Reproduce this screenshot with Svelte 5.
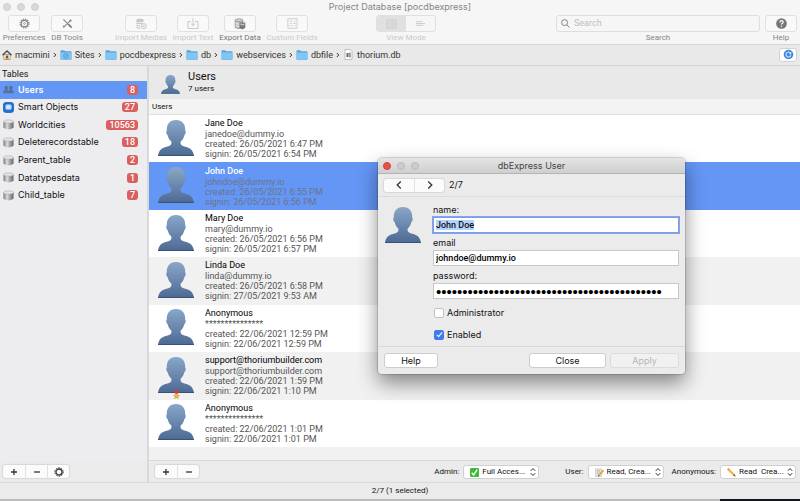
<script>
  import { onMount } from "svelte";

  const tables = [
    { name: "Users", count: 8, icon: "users" },
    { name: "Smart Objects", count: 27, icon: "smart" },
    { name: "Worldcities", count: 10563, icon: "table" },
    { name: "Deleterecordstable", count: 18, icon: "table" },
    { name: "Parent_table", count: 2, icon: "table" },
    { name: "Datatypesdata", count: 1, icon: "table" },
    { name: "Child_table", count: 7, icon: "table" },
  ];

  const users = [
    { name: "Jane Doe", email: "janedoe@dummy.io", created: "26/05/2021 6:47 PM", signin: "26/05/2021 6:54 PM" },
    { name: "John Doe", email: "johndoe@dummy.io", created: "26/05/2021 6:55 PM", signin: "26/05/2021 6:56 PM" },
    { name: "Mary Doe", email: "mary@dummy.io", created: "26/05/2021 6:56 PM", signin: "26/05/2021 6:57 PM" },
    { name: "Linda Doe", email: "linda@dummy.io", created: "26/05/2021 6:58 PM", signin: "27/05/2021 9:53 AM" },
    { name: "Anonymous", email: "***************", created: "22/06/2021 12:59 PM", signin: "22/06/2021 12:59 PM" },
    { name: "support@thoriumbuilder.com", email: "support@thoriumbuilder.com", created: "22/06/2021 1:59 PM", signin: "22/06/2021 1:10 PM", admin: true },
    { name: "Anonymous", email: "***************", created: "22/06/2021 1:01 PM", signin: "22/06/2021 1:01 PM" },
  ];

  const path = ["macmini", "Sites", "pocdbexpress", "db", "webservices", "dbfile", "thorium.db"];

  const access = [
    { id: "admin", label: "Admin:", value: "Full Acces...", icon: "check" },
    { id: "user", label: "User:", value: "Read, Crea...", icon: "memo" },
    { id: "anonymous", label: "Anonymous:", value: "Read\u00a0 Crea...", icon: "pencil" },
  ];

  let activeTable = $state(0);
  let selected = $state(1);
  let name = $state("John Doe");
  let email = $state("johndoe@dummy.io");
  let password = $state("x".repeat(43));
  let administrator = $state(false);
  let enabled = $state(true);
  let nameInput;

  // Start with the whole name selected, ready to be typed over
  onMount(() => {
    nameInput.focus();
    nameInput.select();
  });
</script>

{#snippet person()}
  <svg class="person" viewBox="0 0 36 36" aria-hidden="true">
    <path
      fill="url(#person-fill)"
      d="M18 0C11.500 0 8.500 4.500 8.800 10.500c-.9.300-.6 3.900.9 4.800.5 2.600 1.700 4.700 3.600 6.200.4 1.700.1 3.200-1.300 4.100C8 27.800 1.500 27 0 35.500h36c-1.500-8.500-8-7.700-12-9.900-1.400-.9-1.700-2.400-1.300-4.100 1.900-1.500 3.100-3.600 3.600-6.200 1.500-.9 1.800-4.500.9-4.800C27.500 4.500 24.500 0 18 0z"
    />
    <path stroke="#36517b" d="M0 35.500h36" />
  </svg>
{/snippet}

{#snippet folder(mark)}
  <svg class="folder" viewBox="0 0 12 10" aria-hidden="true">
    <path fill="#56a4dc" d="M.5 1q0-.7.7-.7h3l1 1h5.600q.7 0 .7.7v7q0 .7-.7.7H1.200q-.7 0-.7-.7z" />
    <path fill="#80c5f3" d="M.5 2.600h11v6.200q0 .6-.7.6H1.200q-.7 0-.7-.6z" />
    {#if mark}
      <circle cx="6" cy="6" r="2.300" fill="none" stroke="#3f8fcd" stroke-width=".8" />
      <path stroke="#3f8fcd" stroke-width=".8" d="m5 7 2-2" />
    {/if}
  </svg>
{/snippet}

{#snippet gear()}
  <svg viewBox="0 0 12 12" width="11" height="11" fill="none" stroke="currentColor" aria-hidden="true">
    <circle cx="6" cy="6" r="4.800" stroke-width="1.300" stroke-dasharray="1.500 1.010" />
    <circle cx="6" cy="6" r="3.500" stroke-width="1.300" />
    <circle cx="6" cy="6" r="1" stroke-width=".8" />
  </svg>
{/snippet}

<svg class="defs" width="0" height="0" aria-hidden="true">
  <defs>
    <linearGradient id="person-fill" x1="0" y1="0" x2="0" y2="1">
      <stop offset="0" stop-color="#89a7c9" />
      <stop offset="1" stop-color="#4d6a94" />
    </linearGradient>
    <linearGradient id="drum-fill">
      <stop offset="0" stop-color="#777" />
      <stop offset=".35" stop-color="#ddd" />
      <stop offset=".6" stop-color="#aaa" />
      <stop offset="1" stop-color="#666" />
    </linearGradient>
  </defs>
</svg>

<div class="window">
  <header class="toolbar">
    <div class="titlebar">
      <div class="lights"><i></i><i></i><i></i></div>
      <h1>Project Database [pocdbexpress]</h1>
    </div>
    <div class="tools">
      <button class="tool wide">
        <span class="face">{@render gear()}</span>
        Preferences
      </button>
      <button class="tool narrow">
        <span class="face">
          <svg viewBox="0 0 12 12" width="11" height="11" fill="none" stroke="currentColor">
            <path stroke-width="1.200" d="m1.500 1.500 9 9M10 2 1.500 10.500" />
            <path stroke-width="2" d="m7 7 3.300 3.300M8.500 2 10 3.500M1.500 9.500l1-1" />
          </svg>
        </span>
        DB Tools
      </button>
      <button class="tool medias" disabled>
        <span class="face">
          <svg viewBox="0 0 12 12" width="12" height="12" fill="none" stroke="currentColor">
            <ellipse cx="5" cy="2.500" rx="3.800" ry="1.300" fill="currentColor" />
            <path stroke-width="1.300" d="M1.200 4.800q3 1.600 6.800.2M1.200 7q2 1.200 4 1M1.200 9.300q2 1.200 4 1" />
            <circle cx="8.800" cy="8.200" r="2.600" />
            <path d="M7.500 8.200h2.600M8.800 7v2.500" />
          </svg>
        </span>
        Import Medias
      </button>
      <button class="tool" disabled>
        <span class="face">
          <svg viewBox="0 0 12 12" width="12" height="12" fill="none" stroke="currentColor">
            <path d="M4 3.500H1v7h10v-7H8M6 0v7.500M3.800 5.500 6 7.700l2.200-2.200" />
          </svg>
        </span>
        Import Text
      </button>
      <button class="tool strong">
        <span class="face">
          <svg viewBox="0 0 12 12" width="12" height="12" fill="none" stroke="#999">
            <path fill="#c4c4c4" d="M1.200 2.200v7.300q3.800 2 7.600 0V2.200z" />
            <ellipse cx="5" cy="2.200" rx="3.800" ry="1.300" fill="#ddd" />
            <path stroke="#fff" stroke-width=".6" d="M1.200 5q2 1.200 4 1.200M1.200 7.500q2 1.200 4 1.200" />
            <path fill="#777" stroke="none" d="M5.500 4.500h5.800v5.300l-3 1.700-2.800-1.700z" />
            <path stroke="#fff" stroke-width=".7" d="M7 5.500v1.300h2.800V5.500" />
          </svg>
        </span>
        Export Data
      </button>
      <button class="tool medias" disabled>
        <span class="face">
          <svg viewBox="0 0 12 12" width="11" height="11" fill="none" stroke="currentColor">
            <path d="M1 .8h10v10.400H1zM3 3.500h3M8 3.500h1.500M3 6h2M6.500 6h3M3 8.500h3M8 8.500h1.500" />
          </svg>
        </span>
        Custom Fields
      </button>
      <div class="view-mode">
        <div class="segments">
          <button class="on" aria-label="Grid view">
            <svg viewBox="0 0 12 10" width="11" height="10" fill="none" stroke="currentColor">
              <path d="M1 .5h10v9H1zM2.500 3h1M5 3h4.500M2.500 5h1M5 5h4.500M2.500 7h1M5 7h4.500" />
            </svg>
          </button>
          <button aria-label="Text view">
            <svg viewBox="0 0 12 10" width="11" height="10" fill="none" stroke="currentColor">
              <path d="M1 2.500h7M1 4.500h10M1 6.500h8" />
            </svg>
          </button>
        </div>
        View Mode
      </div>
      <div class="search">
        <div class="field">
          <svg viewBox="0 0 10 10" width="9" height="9" fill="none" stroke="#777">
            <circle cx="4" cy="4" r="3.300" />
            <path d="m6.500 6.500 3 3" />
          </svg>
          <input id="search" type="search" placeholder="Search" />
        </div>
        <label for="search">Search</label>
      </div>
      <button class="tool narrow">
        <span class="face">
          <svg viewBox="0 0 12 12" width="11" height="11" fill="none">
            <circle cx="6" cy="6" r="5.800" fill="#777" />
            <path stroke="#fff" stroke-width="1.300" d="M4.200 4.800C4.200 2.200 8 2.400 7.800 4.600 7.700 5.800 6 5.800 6 7.200M6 8.200v1.300" />
          </svg>
        </span>
        Help
      </button>
    </div>
  </header>

  <nav class="path" aria-label="Path">
    <ol>
      {#each path as part, i}
        <li>
          {#if i === 0}
            <svg viewBox="0 0 10 10" width="10" height="10">
              <path fill="#f7f1e5" stroke="#777" stroke-width=".6" d="M1.800 4.500h6.400v5H1.800z" />
              <path fill="none" stroke="#4d4d4d" stroke-width="1.400" d="M.5 5.200 5 1l4.500 4.200" />
              <path fill="#8d4a16" d="M3.800 5.500h2.500v4H3.800z" />
              <path fill="#f09b28" d="M3.800 8h2.500v1.500H3.800z" />
            </svg>
          {:else if i === path.length - 1}
            <svg class="file" viewBox="0 0 10 11" width="11" height="11">
              <path fill="#fff" stroke="#aaa" stroke-width=".7" d="M1.500.5h5l2 2v8h-7z" />
              <path fill="#666" d="M3 4h2v4H3z" />
              <path fill="#999" d="M5.300 3.500h2v5h-2z" />
            </svg>
          {:else}
            {@render folder(i === 1)}
          {/if}
          <a href={"#" + part}>{part}</a>
          {#if i < path.length - 1}
            <svg class="sep" viewBox="0 0 4 6" width="4" height="6" fill="none" stroke="#333">
              <path d="m.8 1 2 2-2 2" />
            </svg>
          {/if}
        </li>
      {/each}
    </ol>
    <button class="refresh" aria-label="Refresh">
      <svg viewBox="0 0 12 12" width="11" height="11">
        <circle cx="6" cy="6" r="5.200" fill="#3c83e2" />
        <path fill="none" stroke="#d8eaff" stroke-width="1.200" d="M8.600 6.800A2.700 2.700 0 1 1 7.600 3.800" />
        <path fill="#fff" d="M6.500 5.800 9 2.800v3z" />
      </svg>
    </button>
  </nav>

  <div class="body">
    <aside class="sidebar">
      <h2>Tables</h2>
      <ul class="tables">
        {#each tables as table, i}
          <li>
            <button class:active={i === activeTable} onclick={() => (activeTable = i)}>
              {#if table.icon === "users"}
                <svg viewBox="0 0 12 12" width="11" height="11" fill="#587199">
                  <circle cx="3.500" cy="4" r="2" />
                  <circle cx="8.500" cy="4" r="2" />
                  <path d="M0 10q0-3 2.500-3.500V5h2v1.500Q6 7 6 8q0-1 1.500-1.500V5h2v1.500Q12 7 12 10z" />
                </svg>
              {:else if table.icon === "smart"}
                <svg viewBox="0 0 12 12" width="11" height="11">
                  <rect x=".7" y=".7" width="10.600" height="10.600" rx="2" fill="#2270dc" stroke="#1656b5" />
                  <rect x="3" y="3" width="6" height="5" rx="1" fill="#dcecff" stroke="#83b8ff" />
                </svg>
              {:else}
                <svg viewBox="0 0 12 12" width="11" height="11">
                  <path fill="url(#drum-fill)" d="M.5 2.500v7Q6 13.500 11.500 9.500v-7z" />
                  <ellipse cx="6" cy="2.700" rx="5.500" ry="1.800" fill="#e4e4e4" stroke="#999" stroke-width=".5" />
                </svg>
              {/if}
              <span class="label">{table.name}</span>
              <span class="badge">{table.count}</span>
            </button>
          </li>
        {/each}
      </ul>
      <div class="bar">
        <div class="group">
          <button aria-label="Add table"><svg viewBox="0 0 6 6" width="6" height="6"><path d="M0 3h6M3 0v6" /></svg></button>
          <button aria-label="Remove table"><svg viewBox="0 0 6 6" width="6" height="6"><path d="M0 3h6" /></svg></button>
          <button class="cog" aria-label="Table settings">
            <svg viewBox="0 0 10 10" width="10" height="10">
              <circle cx="5" cy="5" r="3" />
              <circle cx="5" cy="5" r="4.200" stroke-width="1" stroke-dasharray="1.500 1.140" />
            </svg>
          </button>
        </div>
      </div>
    </aside>

    <main>
      <div class="heading">
        {@render person()}
        <div>
          <h2>Users</h2>
          <p>7 users</p>
        </div>
      </div>
      <div class="column">Users</div>
      <div class="list">
        <ul class="users">
          {#each users as user, i}
            <li>
              <button class:selected={i === selected} onclick={() => (selected = i)}>
                <span class="avatar">
                  {@render person()}
                  {#if user.admin}
                    <svg class="medal" viewBox="0 0 8 10" width="7" height="9">
                      <path fill="#d6333c" d="M1.500 0h5v3L4 5 1.500 3z" />
                      <path fill="#f2b92d" stroke="#b98317" stroke-width=".4" d="m4 3.500 1 2 2.500.300-1.800 1.600.500 2.300L4 8.600 1.800 9.700l.500-2.300L.5 5.800 3 5.500z" />
                    </svg>
                  {/if}
                </span>
                <span class="details">
                  <strong>{user.name}</strong>
                  <span>{user.email}</span>
                  <span>created: {user.created}</span>
                  <span>signin: {user.signin}</span>
                </span>
              </button>
            </li>
          {/each}
        </ul>
      </div>
      <div class="bar">
        <div class="group">
          <button aria-label="Add user"><svg viewBox="0 0 6 6" width="6" height="6"><path d="M0 3h6M3 0v6" /></svg></button>
          <button aria-label="Remove user"><svg viewBox="0 0 6 6" width="6" height="6"><path d="M0 3h6" /></svg></button>
        </div>
        <div class="access">
          {#each access as item}
            <label for={item.id}>{item.label}</label>
            <div class="popup">
              <svg class="emoji" viewBox="0 0 10 10" width="9" height="9">
                {#if item.icon === "check"}
                  <rect width="10" height="10" rx="1.500" fill="#3dbb36" />
                  <path fill="none" stroke="#fff" stroke-width="1.600" d="m2 5.200 2 2.500 4-6" />
                {:else if item.icon === "memo"}
                  <path fill="#e8e8e8" stroke="#aaa" stroke-width=".5" d="M.5 1h7v8.500h-7z" />
                  <path stroke="#999" stroke-width=".6" d="M2 3h4M2 4.500h3M2 6h2" />
                  <path stroke="#e9a42c" stroke-width="2" d="M9.300 2.500 4.500 8" />
                  <path stroke="#554032" stroke-width="1.200" d="m4.500 8-.9 1" />
                {:else}
                  <path stroke="#f3b62e" stroke-width="2.500" d="m2 2 5.500 5.500" />
                  <path stroke="#e58a89" stroke-width="2.500" d="m.8.8 1.400 1.400" />
                  <path fill="#7a4b22" d="m8.400 6.600-1.800 1.800L9.800 9.800z" />
                {/if}
              </svg>
              <select id={item.id}><option>{item.value}</option></select>
              <svg class="arrows" viewBox="0 0 6 10" width="6" height="10" fill="none" stroke="#333">
                <path d="m.8 3.800 2.200-2.300 2.200 2.300M.8 6.200l2.200 2.300 2.200-2.300" />
              </svg>
            </div>
          {/each}
        </div>
      </div>
    </main>
  </div>

  <footer class="status">2/7 (1 selected)</footer>
  <div class="desktop"></div>
</div>

<div class="dialog" role="dialog" aria-labelledby="dialog-title">
  <div class="titlebar">
    <div class="lights"><i class="close"></i><i></i><i></i></div>
    <h2 id="dialog-title">dbExpress User</h2>
  </div>
  <div class="pager">
    <div class="group">
      <button aria-label="Previous"><svg viewBox="0 0 6 8" width="6" height="8"><path d="M4.800.5 1.200 4l3.600 3.500" /></svg></button>
      <button aria-label="Next"><svg viewBox="0 0 6 8" width="6" height="8"><path d="M1.200.5 4.800 4 1.200 7.500" /></svg></button>
    </div>
    <span>2/7</span>
  </div>
  <form>
    {@render person()}
    <div class="fields">
      <label for="name">name:</label>
      <input id="name" type="text" bind:value={name} bind:this={nameInput} />
      <label for="email">email</label>
      <input id="email" type="text" bind:value={email} />
      <label for="password">password:</label>
      <input id="password" type="password" autocomplete="off" bind:value={password} />
      <label class="tick"><input type="checkbox" bind:checked={administrator} />Administrator</label>
      <label class="tick"><input type="checkbox" bind:checked={enabled} />Enabled</label>
    </div>
  </form>
  <div class="actions">
    <button class="help">Help</button>
    <button class="dismiss">Close</button>
    <button class="apply" disabled>Apply</button>
  </div>
</div>

<style>
  :global(body) {
    margin: 0;
    font: 400 9px/12px Roboto, "Liberation Sans", sans-serif;
    color: #111;
    background: #ececec;
  }

  h1,
  h2,
  p,
  ul,
  ol {
    margin: 0;
    padding: 0;
    font: inherit;
    list-style: none;
  }

  button,
  input,
  select {
    box-sizing: border-box;
    margin: 0;
    padding: 0;
    border: 0;
    font: inherit;
    color: inherit;
    background: none;
  }

  svg {
    display: block;
    flex: none;
  }

  .defs {
    position: absolute;
  }

  .window {
    display: flex;
    flex-direction: column;
    min-height: 100vh;
  }

  /* Toolbar */
  .toolbar {
    background: #f6f6f6;
    border-bottom: 1px solid #d6d6d6;
    color: #858585;
    padding-bottom: 1px;
  }

  .titlebar {
    display: grid;
    grid-template-columns: 1fr auto 1fr;
    align-items: center;
    height: 14px;
  }

  .toolbar h1 {
    font-family: Inter, sans-serif;
  }

  .lights {
    display: flex;
    gap: 6px;
    padding-left: 3px;
  }

  .lights i {
    box-sizing: border-box;
    width: 8px;
    height: 8px;
    border-radius: 50%;
    background: #d9d9d9;
    border: 1px solid #cfcfcf;
  }

  .tools {
    display: flex;
    gap: 5px;
    padding: 1px 3px 0 2px;
    font-size: 8px;
    line-height: 11px;
  }

  .tool {
    display: flex;
    flex-direction: column;
    align-items: center;
    width: 42px;
    white-space: nowrap;
  }

  .tool.wide {
    width: 44px;
  }

  .tool.narrow {
    width: 32px;
  }

  .tool.medias {
    width: 52px;
  }

  .tool.narrow + .medias {
    margin-left: 27px;
  }

  .tool:disabled,
  .view-mode {
    color: #c9c9c9;
  }

  .tool.strong {
    color: #777;
  }

  .face {
    box-sizing: border-box;
    display: flex;
    align-items: center;
    justify-content: center;
    width: 32px;
    height: 17px;
    border: 1px solid #e0e0e0;
    border-radius: 3px;
    background: #f9f9f9;
  }

  .view-mode {
    display: flex;
    flex-direction: column;
    align-items: center;
    margin-left: 53px;
  }

  .segments {
    box-sizing: border-box;
    display: flex;
    width: 60px;
    height: 17px;
    border: 1px solid #e0e0e0;
    border-radius: 3px;
    overflow: hidden;
  }

  .segments button {
    flex: 1;
    display: flex;
    align-items: center;
    justify-content: center;
  }

  .segments .on {
    background: #e0e0e0;
  }

  .search {
    flex: 0 1 204px;
    margin-left: auto;
    text-align: center;
  }

  .field {
    box-sizing: border-box;
    display: flex;
    align-items: center;
    gap: 4px;
    height: 17px;
    padding: 0 4px;
    border: 1px solid #dedede;
    border-radius: 3px;
    font-size: 9px;
  }

  .search label {
    display: block;
  }

  .field input {
    flex: 1;
    min-width: 0;
    outline: none;
    appearance: none;
  }

  .field input::placeholder {
    color: #bdbdbd;
  }

  /* Path bar */
  .path {
    display: flex;
    align-items: center;
    height: 19px;
    padding: 0 3px 1px 2px;
    background: #e9e9e9;
    border-bottom: 1px solid #d4d4d4;
  }

  .path ol {
    display: flex;
    gap: 3px;
    flex: 1;
  }

  .path li {
    display: flex;
    align-items: center;
    gap: 3px;
  }

  .path a {
    color: #333;
    text-decoration: none;
  }

  .folder {
    width: 12px;
    height: 10px;
  }

  .refresh {
    display: flex;
    align-items: center;
    justify-content: center;
    width: 18px;
    height: 14px;
    border: 1px solid #d2d2d2;
    border-radius: 3px;
    background: #fff;
  }

  /* Panes */
  .body {
    flex: 1;
    display: flex;
  }

  .sidebar {
    box-sizing: border-box;
    display: flex;
    flex-direction: column;
    width: 149px;
    border-right: 2px solid #d9d9d9;
    background: #ededf0;
  }

  .sidebar h2 {
    height: 15px;
    padding: 1px 2px 0;
    box-sizing: border-box;
    line-height: 14px;
    background: #ececec;
  }

  .tables {
    display: grid;
    grid-auto-rows: 1fr;
    height: 123px;
    margin-bottom: auto;
  }

  .tables button {
    display: flex;
    align-items: center;
    gap: 4px;
    width: 100%;
    height: 100%;
    padding: 0 9px 0 3px;
    text-align: left;
  }

  .tables .label {
    flex: 1;
    font-family: Inter, sans-serif;
  }

  .tables .active {
    background: #6496f6;
  }

  .tables .active .label {
    color: #fff;
    font-weight: 600;
  }

  .badge {
    padding: 0 3px;
    border-radius: 3px;
    background: #d9605f;
    color: #fff;
    line-height: 10px;
    font-weight: 500;
  }

  .bar {
    box-sizing: border-box;
    display: flex;
    align-items: center;
    height: 21px;
    padding: 0 3px;
    background: #ebebeb;
  }

  .group {
    display: flex;
    background: #fbfbfb;
    border-radius: 3px;
    box-shadow: 0 0 1px 1px #d8d8d8;
  }

  .group button {
    display: flex;
    align-items: center;
    justify-content: center;
    width: 22px;
    height: 13px;
  }

  .group button + button {
    border-left: 1px solid #e2e2e2;
  }

  .group svg {
    fill: none;
    stroke: #333;
    stroke-width: 1.3;
  }

  main {
    flex: 1;
    display: flex;
    flex-direction: column;
    min-width: 0;
  }

  .heading {
    display: flex;
    align-items: center;
    gap: 8px;
    height: 33px;
    padding-left: 12px;
    background: #e9e9e9;
  }

  .heading .person {
    width: 19px;
    height: 19px;
    margin-top: 3px;
  }

  .heading h2 {
    font-size: 11px;
  }

  .heading p {
    font-size: 8px;
    line-height: 11px;
  }

  .column {
    height: 15px;
    padding-left: 3px;
    line-height: 15px;
    font-size: 8px;
    background: #f3f3f3;
    border-bottom: 1px solid #dedede;
  }

  .list {
    flex: 1;
    background: #f1f1f1;
    border-bottom: 1px solid #dadada;
  }

  .users {
    display: grid;
    grid-auto-rows: 1fr;
    height: 332px;
  }

  .users li:nth-child(odd) {
    background: #fff;
  }

  .users button {
    display: flex;
    align-items: center;
    gap: 11px;
    width: 100%;
    height: 100%;
    padding-left: 9px;
    text-align: left;
  }

  .avatar {
    position: relative;
    padding-bottom: 2px;
  }

  .avatar .person {
    width: 36px;
    height: 36px;
  }

  .medal {
    position: absolute;
    bottom: -4px;
    left: 15px;
  }

  .details {
    display: flex;
    flex-direction: column;
    color: #555;
    line-height: 10px;
  }

  .details strong {
    margin-bottom: 1px;
    color: #000;
    font-weight: 400;
  }

  .users .selected {
    background: #6496f6;
  }

  .selected .details {
    color: #6c7485;
  }

  .selected strong {
    color: #fff;
    font-weight: 500;
  }

  main .bar {
    padding: 0 4px 0 6px;
  }

  .access {
    display: flex;
    align-items: center;
    margin-left: auto;
    font-size: 8px;
  }

  .access label {
    margin-right: 4px;
  }

  .popup {
    position: relative;
    margin-right: 26px;
  }

  .popup:nth-of-type(2) {
    margin-right: 8px;
  }

  .popup:last-child {
    margin-right: 0;
  }

  .popup select {
    display: block;
    width: 76px;
    height: 14px;
    padding-left: 18px;
    border: 1px solid #d0d0d0;
    border-radius: 3px;
    background: #fff;
    appearance: none;
  }

  .emoji,
  .arrows {
    position: absolute;
    top: 3px;
    left: 7px;
    pointer-events: none;
  }

  .arrows {
    top: 2px;
    left: auto;
    right: 3px;
  }

  .status {
    height: 16px;
    border-top: 1px solid #dadada;
    background: #ebebeb;
    font-size: 8px;
    line-height: 16px;
    text-align: center;
  }

  .desktop {
    height: 2px;
    background: linear-gradient(90deg, #bbb 90%, #15151d 90%);
  }

  /* User dialog */
  .dialog {
    position: absolute;
    top: 158px;
    left: 378px;
    width: 307px;
    border-radius: 4px;
    overflow: hidden;
    background: #ebebeb;
    font-family: Inter, sans-serif;
    box-shadow:
      0 0 1px 1px rgba(0, 0, 0, 0.15),
      0 9px 20px rgba(0, 0, 0, 0.45);
  }

  .dialog .titlebar {
    background: linear-gradient(#e4e4e4, #cfcfcf);
    border-bottom: 1px solid #b4b4b4;
    height: 15px;
    color: #444;
  }

  .dialog .lights {
    padding-left: 5px;
  }

  .dialog .lights i {
    background: #cdcdcd;
    border-color: #bbb;
  }

  .dialog .lights .close {
    background: #e8504b;
    border-color: #cf403c;
  }

  .pager {
    display: flex;
    align-items: center;
    gap: 5px;
    height: 22px;
    padding: 0 6px;
    border-bottom: 1px solid #dcdcdc;
  }

  .pager .group button {
    width: 30px;
  }

  form {
    display: flex;
    gap: 12px;
    padding: 6px 6px 0 7px;
  }

  form .person {
    width: 36px;
    height: 36px;
    margin-top: 4px;
  }

  .fields {
    flex: 1;
    display: flex;
    flex-direction: column;
  }

  .fields > label {
    height: 14px;
    line-height: 14px;
  }

  .fields > input {
    height: 16px;
    margin-bottom: 3px;
    padding: 0 2px;
    border: 1px solid #c8c8c8;
    background: #fff;
    color: #000;
    font-family: Roboto, sans-serif;
    font-weight: 500;
    outline: none;
  }

  .fields > input[type="password"] {
    font: 15px "Liberation Sans", sans-serif;
  }

  .fields > input:focus {
    border-color: #7d9cf0;
    box-shadow: 0 0 0 1px #86a3ee;
  }

  .fields > input::selection {
    background: #b3d3fc;
    color: #111;
  }

  .fields .tick {
    display: flex;
    align-items: center;
    gap: 3px;
    height: 22px;
    padding-left: 1px;
  }

  .tick input {
    appearance: none;
    width: 10px;
    height: 10px;
    border: 1px solid #c2c2c2;
    border-radius: 2px;
    background: #fff;
  }

  .tick input:checked {
    border-color: #3f7af0;
    background: #3f7af0;
  }

  .tick input:checked::after {
    content: "";
    display: block;
    width: 2px;
    height: 5px;
    margin: 0 auto;
    border: solid #fff;
    border-width: 0 1px 1px 0;
    transform: rotate(40deg);
  }

  .actions {
    display: flex;
    gap: 4px;
    padding: 6px;
    border-top: 1px solid #d8d8d8;
  }

  .actions button {
    height: 15px;
    border: 1px solid #cdcdcd;
    border-radius: 3px;
    background: #fff;
  }

  .actions .help {
    width: 54px;
    margin-right: auto;
  }

  .actions .dismiss {
    width: 77px;
  }

  .actions .apply {
    width: 69px;
    background: #f1f1f1;
    border-color: #dcdcdc;
    color: #b5b5b5;
  }
</style>
